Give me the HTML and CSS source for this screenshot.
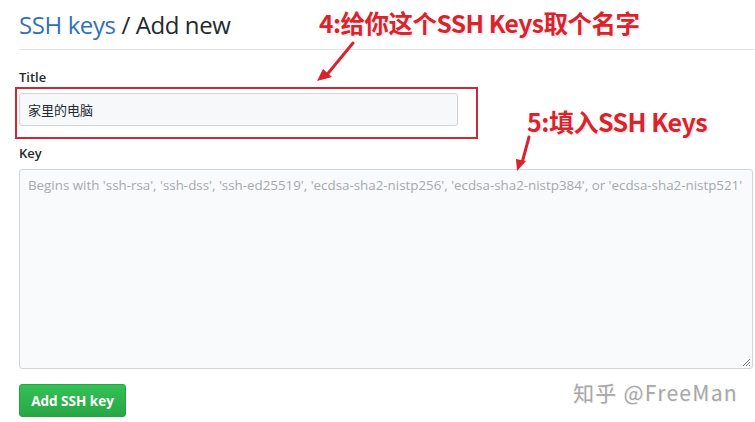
FILE: index.html
```html
<!DOCTYPE html>
<html lang="zh">
<head>
<meta charset="utf-8">
<title>SSH keys / Add new</title>
<link rel="stylesheet" href="styles.css">
</head>
<body>
<div class="page">
  <h2 class="subhead"><a class="crumb" href="#">SSH keys</a> / Add new</h2>
  <form class="form">
    <div class="field">
      <label class="label">Title</label>
      <div class="input-wrap">
        <div class="input">家里的电脑</div>
      </div>
    </div>
    <div class="field">
      <label class="label">Key</label>
      <div class="textarea">
        <span class="placeholder">Begins with 'ssh-rsa', 'ssh-dss', 'ssh-ed25519', 'ecdsa-sha2-nistp256', 'ecdsa-sha2-nistp384', or 'ecdsa-sha2-nistp521'</span>
        <svg class="grip" width="10" height="10" viewBox="0 0 10 10"><path d="M9 2 L2 9 M9 5 L5 9 M9 8 L8 9" stroke="#777" stroke-width="1"/></svg>
      </div>
    </div>
    <button class="btn" type="button">Add SSH key</button>
  </form>

  <div class="note note1">4:给你这个SSH Keys取个名字</div>
  <div class="note note2">5:填入SSH Keys</div>
  <svg class="arrow arrow1" width="60" height="60" viewBox="0 0 60 60">
    <path d="M52 2 L24 36" stroke="#d9232d" stroke-width="3" stroke-linecap="round"/>
    <path d="M16 40 L31 36 L22 28 Z" fill="#d9232d"/>
  </svg>
  <svg class="arrow arrow2" width="30" height="50" viewBox="0 0 30 50">
    <path d="M22 2 L15 28" stroke="#d9232d" stroke-width="3" stroke-linecap="round"/>
    <path d="M10 36 L19 26 L9 24 Z" fill="#d9232d"/>
  </svg>
  <div class="watermark">知乎 @FreeMan</div>
</div>
</body>
</html>
```
FILE: styles.css
```css
* { box-sizing: border-box; }
html, body { margin: 0; padding: 0; background: #fff; }
body {
  font-family: "Open Sans", "Noto Sans", "Noto Sans CJK SC", sans-serif;
  color: #24292e;
  width: 755px;
  height: 422px;
  overflow: hidden;
}
.page {
  position: relative;
  padding: 9px 0 0 19px;
  height: 422px;
}
.subhead {
  margin: 0;
  font-size: 24px;
  font-weight: 400;
  line-height: 32px;
  padding-bottom: 8px;
  border-bottom: 1px solid #e1e4e8;
  letter-spacing: -0.4px;
}
.crumb { color: #3070b8; text-decoration: none; }
.form { padding-top: 19px; display: flex; flex-direction: column; }
.field { display: flex; flex-direction: column; }
.label {
  font-size: 13px;
  font-weight: 600;
  line-height: 16px;
  margin-bottom: 8px;
}
.input-wrap {
  position: relative;
  margin-bottom: 19px;
}
.input-wrap::before {
  content: "";
  position: absolute;
  left: -4px;
  top: -6px;
  width: 459px;
  height: 48px;
  border: 2px solid #c72a38;
}
.input {
  width: 439px;
  height: 33px;
  border: 1px solid #d1d5da;
  border-radius: 3px;
  background: #f6f8fa;
  font-size: 13px;
  line-height: 31px;
  padding-left: 8px;
  color: #24292e;
  font-family: "Noto Sans CJK SC", sans-serif;
}
.textarea {
  position: relative;
  width: 734px;
  height: 200px;
  border: 1px solid #d1d5da;
  border-radius: 3px;
  background: #f9fafb;
  padding: 6px 8px;
  font-size: 13.35px;
  line-height: 18px;
}
.placeholder { color: #a5a9ae; white-space: nowrap; }
.grip { position: absolute; right: 1px; bottom: 1px; }
.btn {
  margin-top: 15px;
  width: 107px;
  height: 33px;
  border: 1px solid #25a244;
  border-radius: 3px;
  background: linear-gradient(#34c155, #28a745);
  color: #fff;
  font-family: "Open Sans", "Noto Sans", sans-serif;
  font-weight: 700;
  font-size: 13.5px;
  padding: 0;
}
.note {
  position: absolute;
  font-family: "Noto Sans CJK SC", sans-serif;
  font-weight: 700;
  line-height: 30px;
  color: #d9232d;
  white-space: nowrap;
  text-shadow: 0 0 2px #fff, 0 0 2px #fff, 1px 1px 2px #f3c9c9;
  letter-spacing: -0.5px;
}
.note1 { left: 319px; top: 8px; font-size: 24.5px; }
.note2 { left: 527px; top: 106px; font-size: 25px; }
.arrow { position: absolute; }
.arrow1 { left: 301px; top: 41px; }
.arrow2 { left: 507px; top: 135px; }
.watermark {
  position: absolute;
  left: 573px;
  top: 377px;
  font-family: "Noto Sans CJK SC", sans-serif;
  font-size: 21px;
  letter-spacing: 1.3px;
  color: #a8a8a8;
  text-shadow: 1px 1px 1px #eee;
  white-space: nowrap;
}
```
